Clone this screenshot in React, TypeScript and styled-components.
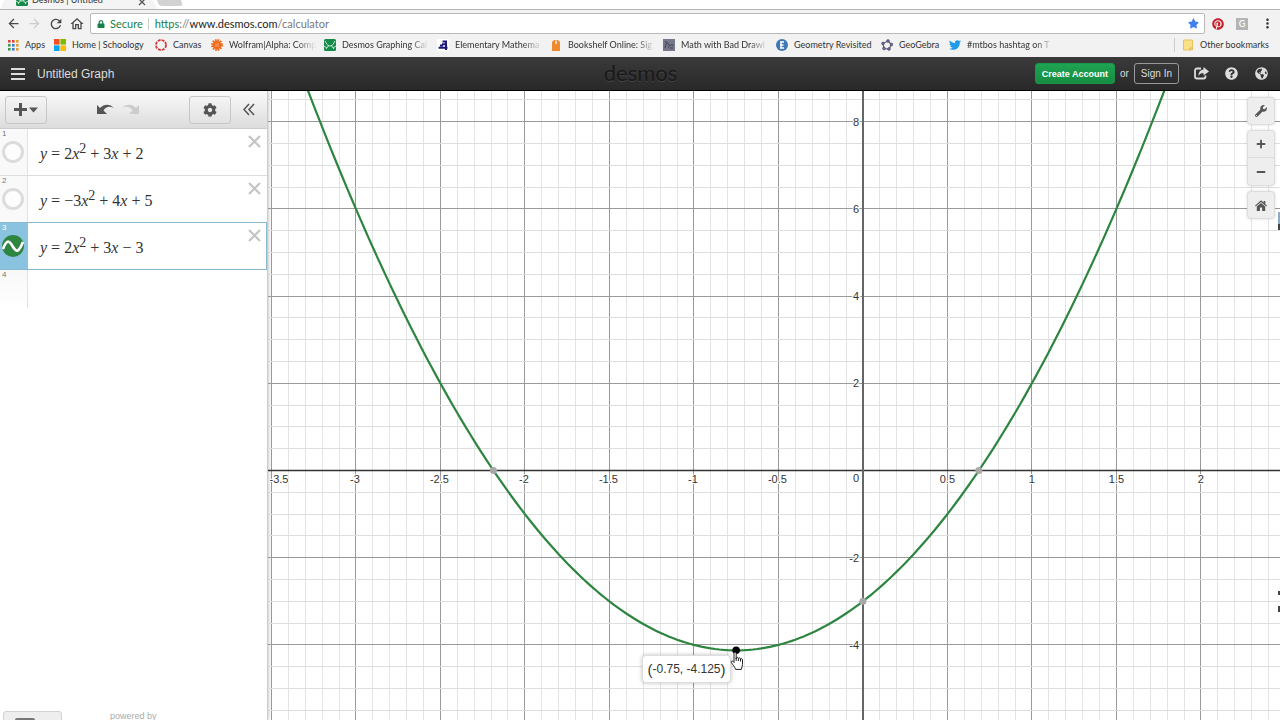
import React from "react";
import styled, { createGlobalStyle, css } from "styled-components";
import {
  FaWrench,
  FaCog,
  FaQuestionCircle,
  FaGlobeAmericas,
  FaPinterest,
  FaTwitter,
  FaLock,
  FaStar,
  FaPlus,
  FaMinus,
} from "react-icons/fa";
import { MdArrowBack, MdArrowForward, MdRefresh, MdOutlineHome, MdMoreVert } from "react-icons/md";

const GlobalStyle = createGlobalStyle`
  * { box-sizing: border-box; }
  html, body { margin: 0; padding: 0; }
  body { overflow: hidden; font-family: "Liberation Sans", Arial, sans-serif; background: #fff; }
  button { font: inherit; padding: 0; border: 0; background: none; color: inherit; cursor: pointer; }
  a { color: inherit; text-decoration: none; }
  svg { display: block; flex: none; }
`;

const Page = styled.div`
  display: flex;
  flex-direction: column;
  height: 100vh;
`;

/* ---------- browser chrome ---------- */

const Chrome = styled.div`
  font-family: Lato, "Open Sans", sans-serif;
  color: #333;
  background: #f2f2f2;
`;

const TabStrip = styled.div`
  display: flex;
  align-items: flex-end;
  height: 10px;
  overflow: hidden;
  background: #fff;
  border-bottom: 1px solid #b4b4b4;
`;

const Tab = styled.div`
  display: flex;
  align-items: flex-end;
  gap: 4px;
  width: 158px;
  height: 20px;
  padding: 0 12px 4px 16px;
  margin-bottom: -1px;
  background: #f4f4f4;
  font-size: 9px;
  line-height: 12px;
  clip-path: polygon(8px 0, 148px 0, 158px 100%, 0 100%);
`;

const TabTitle = styled.span`
  flex: 1;
`;

const NewTab = styled.button`
  width: 24px;
  height: 6px;
  margin-bottom: 3px;
  background: #d2d2d2;
  transform: skewX(20deg);
  border-radius: 0 0 3px 3px;
`;

const NavBar = styled.div`
  display: flex;
  align-items: center;
  height: 24px;
  padding: 3px 0 0 3px;
`;

const NavButton = styled.button<{ $dim?: boolean }>`
  display: flex;
  justify-content: center;
  width: 21px;
  color: ${(p) => (p.$dim ? "#ccc" : "#4a4a4a")};
`;

const AddressBar = styled.div`
  display: flex;
  flex: 1;
  align-items: center;
  height: 21px;
  margin: 0 7px 0 3px;
  padding: 0 5px 0 6px;
  background: #fff;
  border: 1px solid #b8b8b8;
  border-radius: 2px;
  font-size: 11px;
  line-height: 16px;
`;

const Secure = styled.span`
  display: flex;
  align-items: center;
  gap: 5px;
  padding-right: 5px;
  margin-right: 6px;
  border-right: 1px solid #ccc;
  line-height: 12px;
  color: #16804a;
`;

const Url = styled.span`
  flex: 1;
  color: #777;
  b { font-weight: 400; color: #222; }
  i { font-style: normal; color: #16804a; }
`;

const Extensions = styled.div`
  display: flex;
  align-items: center;
  width: 68px;
  gap: 12px;
`;

const Badge = styled.button`
  width: 12px;
  height: 12px;
  background: #b4b4b4;
  color: #fff;
  font-size: 9px;
  line-height: 12px;
  font-weight: 600;
`;

const Bookmarks = styled.nav`
  display: flex;
  align-items: center;
  height: 23px;
  padding: 0 0 2px 7px;
  font-size: 9px;
  line-height: 14px;
`;

const Bookmark = styled.a<{ $width: number; $fade?: boolean }>`
  display: flex;
  align-items: center;
  gap: 6px;
  width: ${(p) => p.$width}px;
  white-space: nowrap;
  span {
    flex: 1;
    ${(p) =>
      p.$fade &&
      css`
        overflow: hidden;
        margin-right: 8px;
        mask-image: linear-gradient(to right, #000 78%, transparent);
      `}
  }
`;

const OtherBookmarks = styled.a`
  display: flex;
  align-items: center;
  gap: 7px;
  margin-left: auto;
  padding: 0 11px 0 8px;
  border-left: 1px solid #ccc;
  white-space: nowrap;
`;

/* ---------- application header ---------- */

const Header = styled.header`
  display: grid;
  grid-template-columns: 1fr auto 1fr;
  align-items: center;
  height: 34px;
  padding: 0 10px 0 11px;
  background: linear-gradient(#3a3a3a, #292929);
  border-bottom: 1px solid #000;
  color: #ddd;
`;

const HeaderGroup = styled.div<{ $end?: boolean }>`
  display: flex;
  align-items: center;
  gap: 12px;
  justify-content: ${(p) => (p.$end ? "flex-end" : "flex-start")};
`;

const GraphTitle = styled.h1`
  margin: 0;
  font-size: 12px;
  font-weight: 400;
`;

const Brand = styled.div`
  font-family: Lato, sans-serif;
  font-size: 22px;
  line-height: 24px;
  padding-bottom: 2px;
  color: #191919;
  text-shadow: 0 1px 0 #444;
`;

const AccountActions = styled.div`
  display: flex;
  align-items: center;
  gap: 5px;
  font-size: 10px;
  margin-right: 1px;
`;

const AccountButton = styled.button<{ $primary?: boolean }>`
  height: 21px;
  padding: 0 6px;
  border-radius: 3px;
  border: 1px solid ${(p) => (p.$primary ? "#1a9549" : "#999")};
  background: ${(p) => (p.$primary ? "linear-gradient(#1fa352, #168c42)" : "transparent")};
  color: ${(p) => (p.$primary ? "#fff" : "#ddd")};
  font-weight: ${(p) => (p.$primary ? 700 : 400)};
  font-size: ${(p) => (p.$primary ? 9 : 10)}px;
  white-space: nowrap;
`;

const HeaderIcon = styled.button`
  display: flex;
  justify-content: center;
  width: 18px;
`;

/* ---------- expression list ---------- */

const Workspace = styled.main`
  display: flex;
  flex: 1;
  min-height: 0;
`;

const Sidebar = styled.aside`
  display: flex;
  flex-direction: column;
  flex: none;
  width: 268px;
  position: relative;
  background: #fff;
  border-right: 1px solid #ccc;
  box-shadow: 0 0 4px rgba(0, 0, 0, 0.3);
`;

const Toolbar = styled.div`
  display: flex;
  align-items: center;
  height: 38px;
  padding: 0 12px 0 5px;
  background: linear-gradient(#fafafa, #dcdcdc);
  border-bottom: 1px solid #ccc;
  color: #555;
`;

const ToolButton = styled.button`
  display: flex;
  align-items: center;
  justify-content: center;
  width: 42px;
  height: 28px;
  border: 1px solid #c8c8c8;
  border-radius: 3px;
  background: linear-gradient(#f4f4f4, #e2e2e2);
`;

const History = styled.div`
  display: flex;
  flex: 1;
  justify-content: center;
  gap: 8px;
`;

const PlainButton = styled.button`
  display: flex;
  color: #555;
`;

const Collapse = styled(PlainButton)`
  margin-left: 12px;
`;

const Expressions = styled.ol`
  flex: 1;
  margin: 0;
  padding: 0;
  list-style: none;
`;

const Row = styled.li<{ $active?: boolean }>`
  display: flex;
  height: 47px;
  border-bottom: 1px solid ${(p) => (p.$active ? "#8bb9d0" : "#ddd")};
  ${(p) =>
    p.$active &&
    css`
      box-shadow: inset -1px 0 #8bb9d0, 0 -1px #8bb9d0;
    `}
`;

const Gutter = styled.div<{ $active?: boolean; $last?: boolean }>`
  display: flex;
  flex-direction: column;
  width: 28px;
  height: ${(p) => (p.$last ? "38px" : "auto")};
  padding: 1px 0 0 2px;
  font-size: 8px;
  line-height: 8px;
  color: ${(p) => (p.$active ? "#fff" : "#777")};
  background: ${(p) => (p.$active ? "#8ac3df" : p.$last ? "linear-gradient(#f8f8f8, #fff)" : "#f9f9f9")};
  border-right: 1px solid ${(p) => (p.$active ? "#8ac3df" : "#e2e2e2")};
`;

const Toggle = styled.button<{ $on?: boolean }>`
  display: flex;
  align-items: center;
  justify-content: center;
  width: 22px;
  height: 22px;
  margin-top: 3px;
  border-radius: 50%;
  border: ${(p) => (p.$on ? "0" : "3px solid #dcdcdc")};
  background: ${(p) => (p.$on ? "#2d8540" : "#fdfdfd")};
`;

const Formula = styled.div`
  display: flex;
  flex: 1;
  align-items: center;
  padding: 4px 0 0 12px;
  font-family: "Liberation Serif", "Times New Roman", serif;
  font-size: 16px;
  line-height: 20px;
  color: #333;
  white-space: pre;
  sup { font-size: 14px; line-height: 0; vertical-align: 6px; }
  b { font-weight: 400; margin: 0 4px; }
`;

const RemoveButton = styled.button`
  display: flex;
  align-self: flex-start;
  margin: 6px 6px 0 0;
  color: #c4c4c4;
`;

const SidebarFooter = styled.footer`
  display: flex;
  align-items: flex-start;
  gap: 48px;
  height: 9px;
  padding-left: 3px;
  overflow: hidden;
  font-size: 9px;
  line-height: 10px;
  color: #aaa;
`;

const KeypadButton = styled.button`
  display: flex;
  align-items: flex-start;
  flex: none;
  width: 59px;
  height: 30px;
  padding: 6px 11px;
  border: 1px solid #d2d2d2;
  border-radius: 3px;
  background: #eee;
`;

/* ---------- graph ---------- */

const GraphPaper = styled.section`
  flex: 1;
  position: relative;
  min-width: 0;
  overflow: hidden;
`;

const Plot = styled.svg`
  width: 100%;
  height: 100%;
  font-family: "Liberation Sans", Arial, sans-serif;
  font-size: 11px;
`;

const PointLabel = styled.output`
  position: absolute;
  left: 374px;
  top: 564px;
  display: flex;
  align-items: center;
  justify-content: center;
  width: 89px;
  height: 28px;
  border: 1px solid #ddd;
  border-radius: 4px;
  background: #fff;
  box-shadow: 0 0 4px rgba(0, 0, 0, 0.25);
  font-size: 12px;
  color: #333;
  white-space: pre;
  big { font-size: 15px; }
`;

const Pointer = styled.svg`
  position: absolute;
  left: 462px;
  top: 560px;
`;

const GraphControls = styled.div`
  position: absolute;
  top: 6px;
  right: 5px;
  display: flex;
  flex-direction: column;
  gap: 5px;
`;

const ControlGroup = styled.div`
  border: 1px solid #ddd;
  border-radius: 4px;
  background: #eee;
  box-shadow: 0 0 3px rgba(0, 0, 0, 0.15);
`;

const Control = styled.button`
  display: flex;
  align-items: center;
  justify-content: center;
  width: 26px;
  height: 26px;
  color: #555;
  & + & { height: 28px; border-top: 1px solid #ddd; }
`;

const EdgeMarks = styled.svg`
  position: absolute;
  right: 0;
  top: 0;
`;

/* ---------- bookmark icons ---------- */

const AppsIcon = () => {
  const colors = ["#d94a3e", "#d94a3e", "#e0a030", "#3d9b55", "#3f7fd0", "#e0a030", "#3d9b55", "#3f7fd0", "#e0a030"];
  return (
    <svg width="12" height="12" viewBox="0 0 12 12">
      {colors.map((c, i) => (
        <rect key={i} x={1 + (i % 3) * 4} y={1 + Math.floor(i / 3) * 4} width="2.6" height="2.6" fill={c} />
      ))}
    </svg>
  );
};

const WindowsIcon = () => (
  <svg width="12" height="12" viewBox="0 0 12 12">
    <path fill="#f25022" d="M0 0h5.6v5.6H0z" />
    <path fill="#7fba00" d="M6.4 0H12v5.6H6.4z" />
    <path fill="#00a4ef" d="M0 6.4h5.6V12H0z" />
    <path fill="#ffb900" d="M6.4 6.4H12V12H6.4z" />
  </svg>
);

const CanvasIcon = () => (
  <svg width="12" height="12" viewBox="0 0 12 12">
    <circle cx="6" cy="6" r="5" fill="none" stroke="#d0383b" strokeWidth="1.8" strokeDasharray="2.9 1.03" />
  </svg>
);

const WolframIcon = () => (
  <svg width="12" height="12" viewBox="0 0 12 12">
    <circle cx="6" cy="6" r="4.4" fill="#ee6b1d" />
    <circle cx="6" cy="6" r="5" fill="none" stroke="#ee6b1d" strokeWidth="2" strokeDasharray="1.6 1.02" />
    <path d="M4 5h4M4 7h4" stroke="#f9b184" strokeWidth=".9" />
  </svg>
);

const DesmosIcon = () => (
  <svg width="12" height="12" viewBox="0 0 12 12">
    <rect width="12" height="12" rx="1.5" fill="#168a48" />
    <path d="M1 2c2 3 2 5 5 5s3-2 5-5M2 10l3-4M10 10L7 6M0 7l3 2M12 7L9 9" stroke="#d6f0df" strokeWidth=".9" fill="none" />
  </svg>
);

const ElementaryIcon = () => (
  <svg width="12" height="12" viewBox="0 0 12 12">
    <rect width="12" height="12" fill="#fff" />
    <path d="M1.500 8.800h9M9 1.500v9.500M5.500 2.500H9M5 5.200h4M3 6.500h3" stroke="#1a1878" strokeWidth="2" fill="none" />
  </svg>
);

const BookshelfIcon = () => (
  <svg width="12" height="12" viewBox="0 0 12 12">
    <path d="M2 3l2-2h4l2 2v9H2z" fill="#ef8a2f" />
    <path d="M5 5V1.5h2V5z" fill="#f7d9bc" />
  </svg>
);

const DrawingsIcon = () => (
  <svg width="12" height="12" viewBox="0 0 12 12">
    <rect width="12" height="12" fill="#77778a" />
    <path d="M2 9c1-6 3-6 4-3s3-3 4 1M2 3h2M7 9h3M5 8h1" stroke="#3d3d50" fill="none" />
  </svg>
);

const GeometryIcon = () => (
  <svg width="12" height="12" viewBox="0 0 12 12">
    <circle cx="6" cy="6" r="6" fill="#3f79b5" />
    <path d="M4 3h4M4 6h3.5M4 9h4M5 3v6" stroke="#fff" strokeWidth="1.3" />
  </svg>
);

const GeoGebraIcon = () => (
  <svg width="12" height="12" viewBox="0 0 12 12">
    <path d="M7 2L2 4.5 3 9.5l5 .5 2.5-4.5z" fill="none" stroke="#666" strokeWidth="1.2" />
    {[[7, 2], [2, 4.5], [3, 9.5], [8, 10], [10.5, 5.5]].map(([x, y]) => (
      <circle key={x} cx={x} cy={y} r="1.4" fill="#7070c0" stroke="#333" strokeWidth=".5" />
    ))}
  </svg>
);

const FolderIcon = () => (
  <svg width="10" height="12" viewBox="0 0 10 12">
    <path d="M.5 1h9v10h-9z" fill="#fbe08a" stroke="#e6c35c" />
    <path d="M7 11V9h2.5" stroke="#d9b34c" fill="none" />
  </svg>
);

const bookmarks: { label: string; icon: React.ReactNode; width: number; fade?: boolean }[] = [
  { label: "Apps", icon: <AppsIcon />, width: 47 },
  { label: "Home | Schoology", icon: <WindowsIcon />, width: 101 },
  { label: "Canvas", icon: <CanvasIcon />, width: 56 },
  { label: "Wolfram|Alpha: Comp", icon: <WolframIcon />, width: 113, fade: true },
  { label: "Desmos Graphing Cal", icon: <DesmosIcon />, width: 113, fade: true },
  { label: "Elementary Mathema", icon: <ElementaryIcon />, width: 113, fade: true },
  { label: "Bookshelf Online: Sig", icon: <BookshelfIcon />, width: 113, fade: true },
  { label: "Math with Bad Drawi", icon: <DrawingsIcon />, width: 113, fade: true },
  { label: "Geometry Revisited", icon: <GeometryIcon />, width: 105 },
  { label: "GeoGebra", icon: <GeoGebraIcon />, width: 68 },
  { label: "#mtbos hashtag on T", icon: <FaTwitter size={12} color="#1d9bea" />, width: 113, fade: true },
];

/* ---------- shared glyphs ---------- */

const Cross = () => (
  <svg width="13" height="13" viewBox="0 0 13 13">
    <path d="M1 1l11 11M12 1L1 12" stroke="currentColor" strokeWidth="2.200" />
  </svg>
);

const AddIcon = () => (
  <svg width="24" height="13" viewBox="0 0 24 13">
    <path d="M0 6.500h13M6.500 0v13" stroke="currentColor" strokeWidth="3" />
    <path d="M15 4.500h9l-4.500 5z" fill="currentColor" />
  </svg>
);

const UndoArrow = ({ flip }: { flip?: boolean }) => (
  <svg width="17" height="11" viewBox="0 0 17 11">
    <path
      transform={flip ? "translate(17 0) scale(-1 1)" : undefined}
      d="M0 1l3 3C7-.5 13-.5 17 4c-4-2-8-2-10.500 2.500L10 10H0z"
      fill={flip ? "#ccc" : "#555"}
    />
  </svg>
);

const ShareIcon = () => (
  <svg width="15" height="13" viewBox="0 0 15 13">
    <path d="M7 1.500H3a2 2 0 0 0-2 2v6a2 2 0 0 0 2 2h6.500a2 2 0 0 0 2-2V8.500" fill="none" stroke="#ddd" strokeWidth="1.800" />
    <path d="M9.500 0L15 4.500 9.500 8.500V6C7 6 5.500 7 4.500 9c0-4 2-6.200 5-6.500z" fill="#ddd" />
  </svg>
);

const HouseIcon = () => (
  <svg width="12" height="11" viewBox="0 0 12 11">
    <path d="M6 .2L8.600 2.600V1h1.700v3.100L12 5.700l-.7.9L6 1.900.7 6.600 0 5.700z" fill="currentColor" />
    <path d="M6 2.900l4.200 3.700V11H7.100V7.500H4.900V11H1.800V6.600z" fill="currentColor" />
  </svg>
);

/* ---------- plot data ---------- */

const ORIGIN = { x: 594.9, y: 379.5 };
const UNIT = { x: 169, y: 43.6 };
const px = (x: number) => ORIGIN.x + x * UNIT.x;
const py = (y: number) => ORIGIN.y - y * UNIT.y;
const snap = (v: number) => Math.floor(v) + 0.5;
const range = (from: number, to: number) => Array.from({ length: to - from + 1 }, (_, i) => from + i);

const curve = range(-180, 120)
  .map((i) => {
    const x = i / 40;
    return `${px(x).toFixed(2)},${py(2 * x * x + 3 * x - 3).toFixed(2)}`;
  })
  .join(" ");

const xLabels = range(-7, 4).filter((i) => i !== 0);
const yLabels = range(-2, 4).filter((i) => i !== 0);

const Graph = () => (
  <Plot role="img" aria-label="Graph of y = 2x² + 3x − 3">
    {range(-36, 100).map((i) => (
      <line key={`x${i}`} x1={snap(px(i / 10))} x2={snap(px(i / 10))} y1="0" y2="100%" stroke={i % 5 ? "#e4e4e4" : "#999"} />
    ))}
    {range(-60, 18).map((i) => (
      <line key={`y${i}`} x1="0" x2="100%" y1={snap(py(i / 2))} y2={snap(py(i / 2))} stroke={i % 4 ? "#dedede" : "#999"} />
    ))}
    <line x1="0" x2="100%" y1={ORIGIN.y} y2={ORIGIN.y} stroke="#333" strokeWidth="1.500" />
    <line x1="595" x2="595" y1="0" y2="100%" stroke="#666" strokeWidth="2" />
    <g fill="#333" stroke="#fff" strokeWidth="2" paintOrder="stroke">
      {xLabels.map((i) => (
        <text key={i} x={Math.max(px(i / 2) - (i < 0 ? 1 : 0), 11)} y="392" textAnchor="middle">
          {i / 2}
        </text>
      ))}
      {yLabels.map((i) => (
        <text key={i} x="591" y={Math.round(py(i * 2)) + 4} textAnchor="end">
          {i * 2}
        </text>
      ))}
      <text x="591" y="391" textAnchor="end">0</text>
    </g>
    <polyline points={curve} fill="none" stroke="#2d8540" strokeWidth="2.200" />
    <g fill="#a8a8a8">
      <circle cx={px(-2.186)} cy={py(0)} r="3.500" />
      <circle cx={px(0.686)} cy={py(0)} r="3.500" />
      <circle cx={px(0)} cy={py(-3)} r="3.500" />
    </g>
    <circle cx={px(-0.75)} cy={py(-4.125)} r="3.800" fill="#000" />
  </Plot>
);

const X2 = () => (
  <>
    <i>x</i>
    <sup>2</sup>
  </>
);

const rows = [
  { id: 1, formula: <span><i>y</i><b>=</b>2<X2 /><b>+</b>3<i>x</i><b>+</b>2</span> },
  { id: 2, formula: <span><i>y</i><b>=</b>−3<X2 /><b>+</b>4<i>x</i><b>+</b>5</span> },
  { id: 3, formula: <span><i>y</i><b>=</b>2<X2 /><b>+</b>3<i>x</i><b>−</b>3</span>, active: true },
];

export default function App() {
  return (
    <Page>
      <GlobalStyle />
      <Chrome>
        <TabStrip>
          <Tab>
            <DesmosIcon />
            <TabTitle>Desmos | Untitled</TabTitle>
            <svg width="8" height="8" viewBox="0 0 8 8">
              <path d="M1 1l6 6M7 1L1 7" stroke="#555" strokeWidth="1.300" />
            </svg>
          </Tab>
          <NewTab aria-label="New tab" />
        </TabStrip>
        <NavBar>
          <NavButton aria-label="Back"><MdArrowBack size={15} /></NavButton>
          <NavButton aria-label="Forward" $dim><MdArrowForward size={15} /></NavButton>
          <NavButton aria-label="Reload"><MdRefresh size={16} /></NavButton>
          <NavButton aria-label="Home"><MdOutlineHome size={16} /></NavButton>
          <AddressBar>
            <Secure><FaLock size={8} />Secure</Secure>
            <Url><i>https</i>://<b>www.desmos.com</b>/calculator</Url>
            <FaStar size={11} color="#4080ee" />
          </AddressBar>
          <Extensions>
            <FaPinterest size={12} color="#c8202c" />
            <Badge>G</Badge>
            <MdMoreVert size={15} />
          </Extensions>
        </NavBar>
        <Bookmarks aria-label="Bookmarks">
          {bookmarks.map((b) => (
            <Bookmark key={b.label} href="#" $width={b.width} $fade={b.fade}>
              {b.icon}
              <span>{b.label}</span>
            </Bookmark>
          ))}
          <OtherBookmarks href="#"><FolderIcon />Other bookmarks</OtherBookmarks>
        </Bookmarks>
      </Chrome>

      <Header>
        <HeaderGroup>
          <PlainButton aria-label="Menu">
            <svg width="14" height="12" viewBox="0 0 14 12">
              <path d="M0 1h14M0 6h14M0 11h14" stroke="#ddd" strokeWidth="2" />
            </svg>
          </PlainButton>
          <GraphTitle>Untitled Graph</GraphTitle>
        </HeaderGroup>
        <Brand>desmos</Brand>
        <HeaderGroup $end>
          <AccountActions>
            <AccountButton $primary>Create Account</AccountButton>
            or
            <AccountButton>Sign In</AccountButton>
          </AccountActions>
          <HeaderIcon aria-label="Share"><ShareIcon /></HeaderIcon>
          <HeaderIcon aria-label="Help"><FaQuestionCircle size={13} /></HeaderIcon>
          <HeaderIcon aria-label="Language"><FaGlobeAmericas size={13} /></HeaderIcon>
        </HeaderGroup>
      </Header>

      <Workspace>
        <Sidebar>
          <Toolbar>
            <ToolButton aria-label="Add item"><AddIcon /></ToolButton>
            <History>
              <PlainButton aria-label="Undo"><UndoArrow /></PlainButton>
              <PlainButton aria-label="Redo"><UndoArrow flip /></PlainButton>
            </History>
            <ToolButton aria-label="Settings"><FaCog size={14} /></ToolButton>
            <Collapse aria-label="Hide list">
              <svg width="12" height="13" viewBox="0 0 12 13">
                <path d="M6 1L1 6.500l5 5.500M11 1L6 6.500l5 5.500" fill="none" stroke="#555" strokeWidth="1.500" />
              </svg>
            </Collapse>
          </Toolbar>
          <Expressions>
            {rows.map((r) => (
              <Row key={r.id} $active={r.active}>
                <Gutter $active={r.active}>
                  {r.id}
                  <Toggle $on={r.active} aria-label={`Show expression ${r.id}`}>
                    {r.active && (
                      <svg width="22" height="22" viewBox="0 0 22 22">
                        <path d="M1 14C4 6 6.500 4.500 9.500 9.500s5 7.500 7 5.500 3-4 4.500-8" fill="none" stroke="#fff" strokeWidth="2.600" />
                      </svg>
                    )}
                  </Toggle>
                </Gutter>
                <Formula>{r.formula}</Formula>
                <RemoveButton aria-label="Remove expression"><Cross /></RemoveButton>
              </Row>
            ))}
            <li><Gutter $last>4</Gutter></li>
          </Expressions>
          <SidebarFooter>
            <KeypadButton aria-label="Keypad">
              <svg width="20" height="12" viewBox="0 0 20 12"><rect width="20" height="12" rx="2" fill="#777" /></svg>
            </KeypadButton>
            powered by
          </SidebarFooter>
        </Sidebar>

        <GraphPaper>
          <Graph />
          <PointLabel><big>(</big>-0.75, -4.125<big>)</big></PointLabel>
          <Pointer width="15" height="20" viewBox="0 0 15 20">
            <path
              d="M4 2.500c0-1.800 2.200-1.800 2.200 0V8l.1-1c.4-1 2-.8 2.100.4.500-.9 2-.6 2.100.6.600-.8 2-.4 2 .9v4.500c0 2-1 3-1.200 5H5.600C5 16 2.500 13.500 1.300 11.500c-.6-1.200.8-2 1.800-1L4 11.500z"
              fill="#fff"
              stroke="#222"
            />
            <path d="M6.200 7v3M8.400 7.500V10M10.500 8v2.500" stroke="#222" />
          </Pointer>
          <GraphControls>
            <ControlGroup>
              <Control aria-label="Graph settings"><FaWrench size={12} /></Control>
            </ControlGroup>
            <ControlGroup>
              <Control aria-label="Zoom in"><FaPlus size={10} /></Control>
              <Control aria-label="Zoom out"><FaMinus size={10} /></Control>
            </ControlGroup>
            <ControlGroup>
              <Control aria-label="Default viewport"><HouseIcon /></Control>
            </ControlGroup>
          </GraphControls>
          <EdgeMarks width="2" height="540" aria-hidden="true">
            <path d="M1 121v12" stroke="#8fa9c8" strokeWidth="2" />
            <path d="M1 133v6M1 500v4M1 515v6" stroke="#444" strokeWidth="2" />
          </EdgeMarks>
        </GraphPaper>
      </Workspace>
    </Page>
  );
}
